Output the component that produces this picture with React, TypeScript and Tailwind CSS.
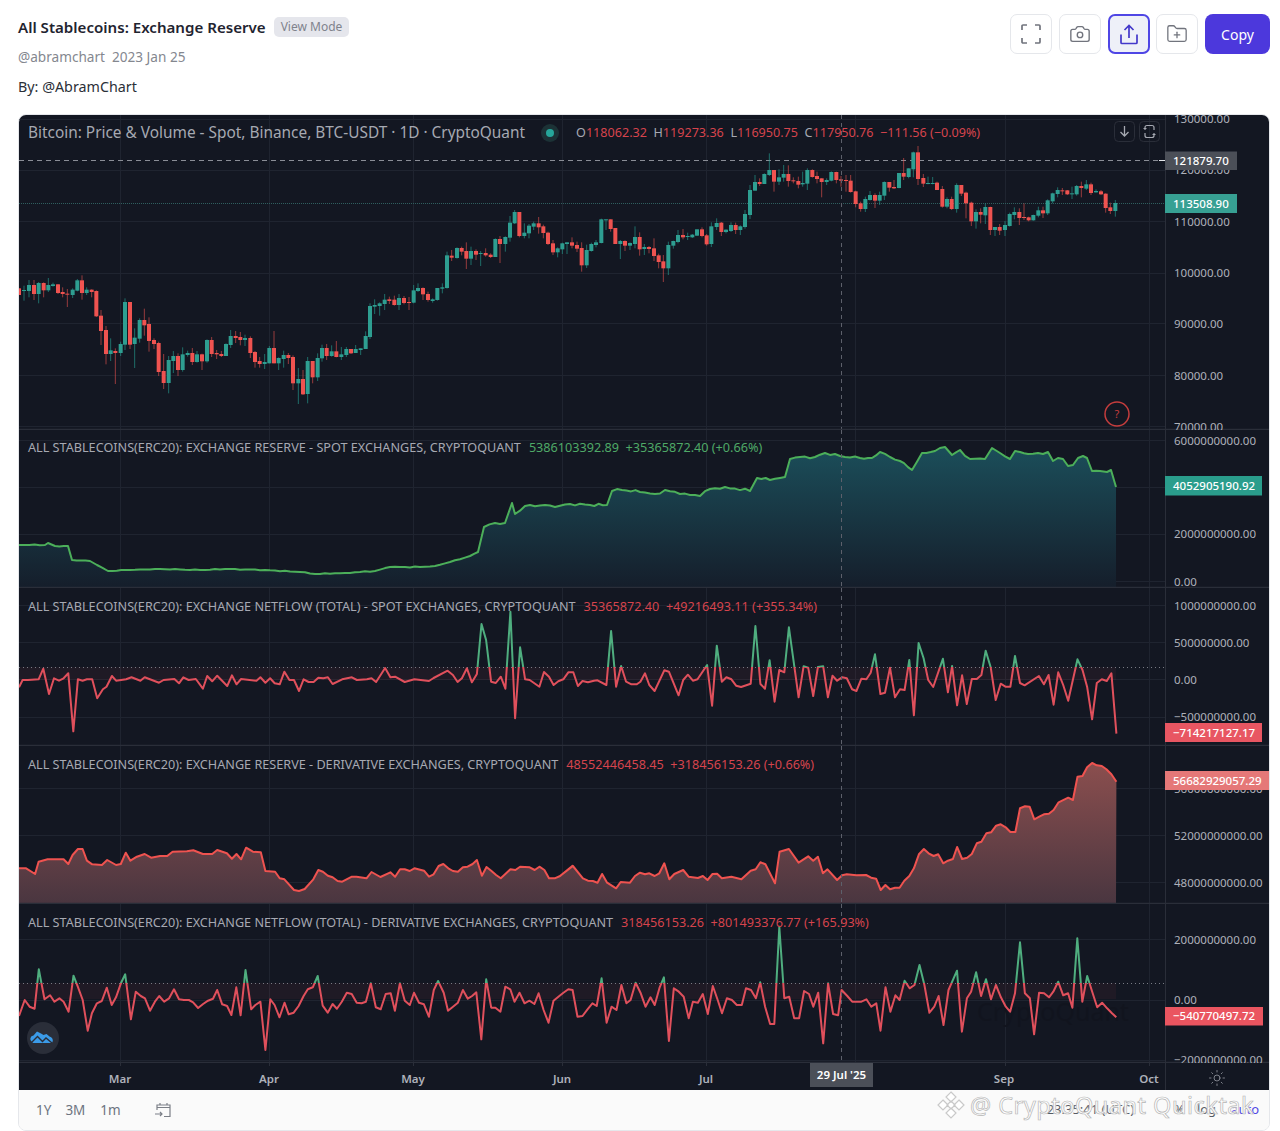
import React from "react";
import { Camera, FolderPlus, Sun } from "lucide-react";

type C = number[];
// candles: x, green?, bodyTop, bodyBottom, high, low (in sampled coordinates)
const seg1: C[] = [[0,0,415,435,415,435],[15,1,420,423,407,452],[30,1,405,423,390,442],[45,0,405,432,390,450],[59,1,399,432,396,460],[74,0,399,421,397,442],[88,1,405,421,384,426],[102,1,403,408,398,410],[117,0,403,429,402,432],[131,0,426,432,412,442],[145,0,431,434,417,471],[161,1,419,435,415,444],[175,1,391,422,387,424],[189,0,391,429,376,449],[203,1,419,429,412,435],[218,0,419,426,418,442],[232,0,423,499,421,501],[246,0,497,543,480,585],[261,0,540,612,528,643],[275,1,601,612,565,633],[289,0,603,609,595,702],[305,1,582,609,575,618],[318,1,456,584,445,600],[333,0,456,584,456,597],[347,1,563,582,535,654],[362,1,510,566,505,578],[376,0,510,526,476,557],[390,0,522,573,502,605],[405,0,570,582,565,597],[419,0,579,666,575,678],[434,0,663,699,612,717],[449,1,630,699,618,730],[463,1,618,633,603,669],[477,0,618,660,610,678],[491,1,613,660,592,665],[506,1,609,615,602,620],[520,0,609,636,594,645],[534,1,613,636,603,638],[549,0,613,634,611,660],[564,1,570,634,568,638],[578,0,570,612,561,621],[593,0,609,613,600,627],[607,0,612,618,603,621],[621,1,582,618,580,618],[635,1,558,585,540,594],[650,0,558,564,543,579],[664,0,561,570,546,586],[678,1,564,570,554,588],[694,0,564,609,559,624],[708,0,606,636,603,653],[722,0,633,642,621,653],[737,1,636,642,612,657],[751,1,594,640,588,640],[765,0,594,640,543,640],[779,1,624,640,622,660],[794,1,615,627,602,653],[808,0,615,624,609,642],[822,0,621,700,616,720],[838,1,687,700,654,762],[852,0,687,733,660,735],[866,1,633,732,621,760],[881,0,633,682,633,700],[896,1,624,682,610,693],[909,1,594,625,584,635],[923,0,594,618,582,630],[938,1,604,618,586,620],[952,0,604,621,573,622],[967,1,613,621,591,630],[982,1,597,615,591,621],[996,0,597,610,597,612],[1010,1,597,609,585,609],[1025,1,595,600,595,615],[1040,1,558,597,544,597],[1053,1,468,561,460,567],[1067,1,465,470,448,492],[1082,1,460,468,457,497],[1097,1,449,462,432,480],[1111,0,448,453,440,462],[1126,0,449,465,437,467],[1140,1,444,465,432,480],[1155,0,444,459,438,463],[1170,0,456,459,441,480],[1184,1,421,458,405,460],[1197,1,414,423,400,426]];
const seg2: C[] = [[69,0,414,433,412,450],[84,0,432,450,425,455],[98,1,448,453,445,458],[112,1,414,450,414,452],[127,1,412,416,400,430],[141,1,316,414,305,416],[155,0,317,323,300,333],[171,1,294,324,292,326],[185,0,294,305,290,316],[199,0,303,326,277,357],[213,1,303,326,290,345],[228,0,303,314,298,330],[242,1,309,312,303,348],[257,0,309,316,295,320],[272,0,314,321,310,324],[286,1,267,321,265,321],[300,0,267,282,258,339],[316,1,261,282,259,305],[330,1,218,263,198,275],[344,1,186,220,180,222],[358,0,186,258,186,262],[373,1,248,258,220,265],[387,1,227,250,222,265],[401,1,220,230,215,240],[416,0,220,232,201,251],[430,0,229,249,224,265],[444,0,248,282,245,285],[459,0,280,307,270,315],[473,1,295,307,292,322],[487,1,280,298,278,312],[501,1,277,282,277,312],[516,0,277,287,262,295],[531,0,285,296,275,306],[545,0,294,346,277,365],[560,1,300,346,284,354],[574,1,282,303,278,305],[588,1,277,285,270,292],[604,1,208,279,206,280],[618,1,208,210,208,240],[632,0,208,237,208,245],[646,0,234,282,234,282],[661,1,273,282,270,327],[675,0,273,287,271,303],[690,1,279,287,277,300],[705,1,261,282,229,295],[719,0,261,298,247,317],[733,1,291,297,282,315],[747,0,291,297,288,310],[762,0,295,318,265,333],[776,0,316,336,311,355],[790,0,334,355,315,396],[805,1,285,355,275,375],[820,1,273,287,272,296],[834,1,255,276,240,280],[849,0,255,262,237,268],[863,1,258,261,248,270],[877,1,254,262,252,264],[891,1,238,257,238,258],[906,0,238,258,232,262],[920,0,256,283,252,287],[934,1,229,282,217,291],[950,1,219,231,205,240],[964,0,218,246,216,258],[978,1,239,246,238,250],[993,1,225,243,217,246],[1007,0,225,240,218,252],[1021,1,229,240,226,255],[1035,1,192,231,180,236],[1050,1,120,195,105,207],[1065,1,96,122,75,122],[1079,0,96,102,85,108],[1093,1,72,102,70,102],[1108,1,60,75,10,78],[1122,0,60,95,60,125],[1137,1,82,95,58,105],[1151,1,72,83,45,95],[1165,0,72,93,46,110],[1180,0,91,94,82,100],[1195,0,93,104,80,115]];
const seg3: C[] = [[128,1,129,133,95,140],[142,1,90,131,85,150],[157,0,90,111,88,113],[171,0,108,117,95,130],[185,0,115,126,115,172],[200,1,120,126,115,135],[214,1,96,122,94,124],[229,0,96,120,95,130],[243,0,118,122,108,140],[258,0,120,123,105,155],[272,0,122,156,105,158],[287,0,154,192,152,202],[302,0,190,207,185,215],[316,1,177,207,170,216],[330,1,165,180,153,182],[345,0,165,182,160,204],[359,1,165,182,155,195],[373,1,126,167,124,180],[388,0,126,143,126,155],[402,0,141,145,120,147],[417,1,99,144,99,145],[431,0,99,110,54,120],[446,1,85,111,85,115],[460,1,37,88,35,112],[474,0,37,117,18,135],[490,0,114,131,102,141],[504,1,129,132,110,133],[518,1,129,132,111,133],[531,0,128,150,125,150],[547,0,147,200,138,203],[561,1,177,200,172,205],[575,0,177,207,170,210],[590,1,135,207,130,218],[604,0,135,161,135,168],[618,0,158,190,155,235],[634,0,188,244,185,258],[648,1,216,244,208,266],[662,0,216,224,205,250],[676,1,201,226,190,252],[691,0,201,270,200,285],[705,1,261,270,261,288],[719,0,261,272,252,285],[735,1,255,270,243,288],[749,1,222,258,218,260],[763,1,216,225,202,238],[778,0,216,234,205,255],[792,0,231,234,190,240],[806,0,232,241,230,244],[820,1,225,241,224,242],[835,1,211,227,200,232],[849,0,211,220,200,234],[863,1,181,220,178,225],[878,1,160,184,158,190],[893,1,150,162,142,172],[907,0,151,154,144,165],[922,0,151,163,150,165],[936,1,160,163,140,177],[950,1,138,163,135,167],[964,0,138,144,125,172],[979,1,133,146,120,150],[993,0,133,159,128,165],[1008,1,153,157,148,158],[1023,0,154,163,150,165],[1037,0,161,204,160,218],[1051,0,202,213,188,222],[1066,1,189,213,180,230]];

const candles = [
  ...seg1.map((c) => ({ x: 19 + c[0] / 3, g: c[1], t: 150 + c[2] / 3, b: 150 + c[3] / 3, h: 150 + c[4] / 3, l: 150 + c[5] / 3 })),
  ...seg2.map((c) => ({ x: 400 + c[0] / 3, g: c[1], t: 150 + c[2] / 3, b: 150 + c[3] / 3, h: 150 + c[4] / 3, l: 150 + c[5] / 3 })),
  ...seg3.map((c) => ({ x: 760 + c[0] / 3, g: c[1], t: 140 + c[2] / 3, b: 140 + c[3] / 3, h: 140 + c[4] / 3, l: 140 + c[5] / 3 })),
];

const pts = (s: number[], ox: number, sx: number, oy: number, sy: number) => {
  const out: [number, number][] = [];
  for (let i = 0; i < s.length; i += 2) out.push([ox + s[i] / sx, oy + s[i + 1] / sy]);
  return out;
};
const toD = (p: [number, number][]) => p.map((q, i) => `${i ? "L" : "M"}${q[0].toFixed(1)} ${q[1].toFixed(1)}`).join("");

const reserveSpotRaw: [number, number][] = [[19,545],[45,545],[48,543],[55,546],[68,546],[72,560],[90,561],[97,565],[108,571],[130,570],[160,569],[200,570],[225,569],[265,570],[300,572],[315,574],[345,573],[375,571],[390,567],[420,567],[435,566],[450,562],[470,556],[478,552],[484,527],[495,523],[505,523],[512,503],[515,514],[525,506],[545,505],[555,507],[570,504],[590,505],[607,505],[612,491],[622,490],[640,492],[655,494],[665,490],[680,494],[700,496],[710,489],[725,487],[750,491],[757,478],[770,480],[785,477],[790,459],[800,457],[815,457],[825,453],[840,456],[860,458],[872,458],[880,452],[890,457],[900,461],[912,470],[922,453],[935,451],[945,447],[952,455],[960,450],[970,459],[985,459],[992,448],[1000,453],[1010,459],[1015,451],[1020,452],[1028,454],[1038,453],[1043,454],[1048,452],[1053,461],[1058,458],[1063,459],[1068,466],[1073,465],[1078,458],[1083,456],[1087,458],[1092,471],[1100,471],[1107,472],[1111,470],[1116,487]];

const reserveSpot: [number, number][] = (() => {
  const out: [number, number][] = [];
  let k = 0;
  for (let j = 0; j < reserveSpotRaw.length - 1; j++) {
    const [x0, y0] = reserveSpotRaw[j];
    const [x1, y1] = reserveSpotRaw[j + 1];
    const n = Math.max(1, Math.round((x1 - x0) / 4.8));
    for (let i = 0; i < n; i++) {
      const f = i / n;
      const amp = x0 < 480 ? 0.25 : x0 < 1000 ? 0.8 : 0.2;
      const noise = i === 0 ? 0 : (Math.sin(k * 1.7) + Math.sin(k * 3.1 + 1)) * amp;
      out.push([x0 + (x1 - x0) * f, y0 + (y1 - y0) * f + noise]);
      k++;
    }
  }
  out.push(reserveSpotRaw[reserveSpotRaw.length - 1]);
  return out;
})();

const netSpot = [
  ...pts([0,292,10,270,25,270,55,268,68,236,84,312,98,265,112,272,125,265,138,250,152,424,165,268,178,272,190,268,205,268,219,325,235,298,245,290,260,258,272,272,300,268,315,262,340,272,352,262,392,278,405,270,435,267,448,280,460,262,475,270,495,267,515,296,527,258,541,274,555,257,583,288,596,256,609,283,622,267,665,272,676,262,690,278,703,265,716,280,730,283,743,245,757,270,770,270,784,303,797,268,811,276,825,276,838,263,852,265,865,262,878,282,905,268,932,262,946,270,974,268,987,265,1000,276,1025,234,1040,262,1053,260,1080,276,1107,268,1148,273,1161,264,1200,242,1215,255,1228,276,1240,265,1254,235,1268,277,1282,252,1295,102,1308,150,1322,275,1335,279,1349,260,1362,296,1376,65,1389,385,1403,172,1417,268,1430,270,1457,290,1470,246,1484,260,1497,285,1510,274,1524,268,1538,247,1552,247], 19, 2.8, 590, 3),
  ...pts([50,288,63,273,78,277,95,272,105,271,130,285,143,123,157,290,171,228,185,275,200,283,215,283,225,275,238,250,250,285,265,303,292,241,305,245,332,316,345,270,358,254,372,272,385,268,412,225,426,347,439,167,453,275,466,262,480,268,493,287,507,291,534,281,547,108,561,282,574,296,587,211,601,335,614,240,628,247,641,112,668,322,682,229,695,233,709,318,722,231,737,229,750,322,763,257,776,272,790,262,803,265,818,298,830,303,844,266,858,268,870,248,882,193,897,312,910,308,924,233,938,322,952,298,965,300,978,210,991,376,1004,159,1018,205,1031,270,1045,291,1072,206,1086,307,1098,228,1112,346,1126,256,1139,342,1153,267,1167,267,1180,255,1192,182,1206,232,1220,330,1234,281,1247,290,1261,290,1274,198,1288,279,1301,286,1341,258,1355,283,1368,255,1382,344,1395,247,1409,285,1423,332,1449,208,1463,240,1476,290,1490,388,1503,279,1517,268,1531,273,1544,250,1558,431], 560, 2.8, 590, 3),
];

const reserveDeriv = [
  ...pts([0,835,20,835,45,852,55,815,80,808,105,808,125,808,138,822,150,795,165,777,178,777,190,812,205,823,232,825,247,810,272,825,285,822,299,788,312,812,330,800,352,792,370,803,395,798,415,798,430,785,470,784,488,781,515,792,541,792,555,780,582,790,596,806,609,792,622,808,636,773,655,785,677,787,690,843,717,845,730,865,743,868,770,900,784,903,800,897,824,868,838,840,851,845,865,857,878,862,892,873,905,875,932,860,945,860,973,865,987,846,1012,861,1040,847,1053,860,1067,838,1080,838,1094,843,1107,835,1134,842,1148,860,1161,853,1175,828,1188,822,1202,835,1215,843,1229,845,1243,832,1256,830,1270,822,1282,810,1296,857,1309,831,1323,843,1336,855,1349,865,1376,838,1390,840,1403,830,1430,832,1444,840,1457,830,1471,840,1484,865,1500,865,1515,858,1550,827], 19, 2.8, 590, 3),
  ...pts([0,858,36,828,64,865,78,872,92,873,105,878,118,852,132,878,157,895,170,876,196,878,210,858,224,848,238,853,250,850,265,858,278,850,292,820,306,868,320,852,345,840,360,860,386,864,400,858,413,870,427,852,440,851,453,865,480,860,508,868,534,842,548,838,561,817,575,823,602,880,615,785,641,777,668,818,695,799,709,812,722,800,736,850,749,838,776,870,790,856,803,853,830,856,857,855,871,863,885,866,898,900,911,885,924,898,938,893,951,893,964,872,978,858,991,835,1005,793,1019,777,1032,790,1046,798,1059,793,1073,820,1086,812,1100,807,1112,771,1126,807,1140,803,1153,792,1167,760,1180,755,1194,730,1207,727,1221,707,1234,703,1248,712,1261,726,1275,726,1288,655,1302,649,1315,650,1328,688,1342,680,1355,673,1369,671,1382,660,1396,637,1423,623,1436,630,1449,560,1463,558,1476,532,1490,519,1503,526,1517,528,1530,538,1544,553,1558,575], 560, 2.8, 590, 3),
];

const netDeriv = pts([0,318,8,270,15,290,22,296,28,178,36,268,44,256,50,275,57,265,63,275,70,305,77,197,83,230,90,270,97,362,103,310,110,280,117,273,124,233,131,285,137,262,144,220,150,193,158,328,165,245,172,258,178,265,185,302,192,275,198,258,205,275,212,265,219,238,226,268,233,270,240,270,246,277,253,294,260,282,267,272,274,266,280,240,287,283,294,288,300,315,307,232,313,316,320,180,328,298,334,285,341,275,348,420,355,268,361,285,368,322,375,278,381,313,388,308,395,288,402,258,408,238,415,232,422,198,429,287,436,308,443,282,449,296,456,275,463,248,470,252,477,278,484,280,490,275,497,220,504,292,511,298,518,252,525,250,531,302,538,220,545,272,552,285,558,248,565,278,572,283,579,320,586,240,592,213,600,248,606,302,613,290,620,278,627,240,634,266,640,258,646,247,653,388,660,208,667,293,673,293,680,305,687,230,694,238,700,275,707,248,714,280,721,272,728,282,734,250,741,300,748,338,755,272,762,260,769,248,776,238,782,240,789,320,796,318,803,298,810,280,816,288,823,205,830,338,837,290,844,300,851,225,858,280,864,270,871,218,878,248,885,290,892,262,898,285,905,232,911,202,918,393,925,235,932,245,939,260,946,325,952,275,959,278,966,252,973,312,980,228,987,270,993,310,1000,265,1007,270,1014,285,1021,285,1027,235,1034,240,1041,265,1047,217,1054,290,1061,342,1067,342,1074,50,1081,265,1088,260,1095,325,1102,325,1109,243,1116,252,1122,290,1129,248,1136,400,1143,220,1150,312,1157,316,1162,240,1170,258,1177,275,1184,275,1190,275,1197,268,1204,290,1211,280,1217,362,1224,232,1231,305,1238,256,1244,270,1251,212,1258,235,1265,225,1272,165,1279,225,1286,308,1293,290,1299,258,1306,345,1313,240,1325,182,1332,365,1339,265,1345,245,1352,187,1359,258,1366,208,1373,268,1380,225,1387,262,1394,290,1400,305,1407,250,1414,97,1421,250,1428,265,1434,373,1441,248,1448,250,1455,262,1461,245,1468,215,1475,256,1482,250,1488,293,1495,85,1502,275,1509,198,1516,245,1523,292,1530,278,1537,295,1544,310,1550,322], 19, 1.4126, 910, 3);

const VGRID = [120, 269, 413, 562, 706, 855, 1005, 1149];
const GRID = "#1f2430";
const SEP = "#2a2e39";

type Tick = { y: number; label: string };
type Tag = { t: number; b: number; r: number; fill: string; label: string };

function Pane({ top, height, grid, ticks, tags, legend, children }: {
  top: number; height: number; grid: number[]; ticks: Tick[]; tags: Tag[]; legend: React.ReactNode; children: React.ReactNode;
}) {
  const bottom = top + height;
  return (
    <div className="relative w-full shrink-0 overflow-hidden" style={{ height }}>
      <svg width={1250} height={height} viewBox={`19 ${top} 1250 ${height}`} className="block">
        {VGRID.map((x) => <line key={x} x1={x + 0.5} x2={x + 0.5} y1={top} y2={bottom} stroke={GRID} />)}
        {grid.map((y) => <line key={y} x1={19} x2={1165} y1={y + 0.5} y2={y + 0.5} stroke={GRID} />)}
        {children}
        <line x1={841.5} x2={841.5} y1={top} y2={bottom} stroke="#5d606b" strokeDasharray="4 4" />
        <line x1={1165.5} x2={1165.5} y1={top} y2={bottom} stroke={SEP} />
        <line x1={19} x2={1269} y1={bottom - 0.5} y2={bottom - 0.5} stroke={SEP} strokeWidth={1.5} />
        {ticks.map((t) => (
          <text key={t.label} x={1174} y={t.y + 4} className="fill-[#aeb1ba] text-[11.5px]">{t.label}</text>
        ))}
        {tags.map((t) => (
          <g key={t.label}>
            <rect x={1165} y={t.t} width={t.r - 1165} height={t.b - t.t} fill={t.fill} />
            <text x={1173} y={(t.t + t.b) / 2 + 4} className="fill-white text-[11.5px] font-medium">{t.label}</text>
          </g>
        ))}
      </svg>
      <div className="absolute left-[9px] top-0 flex items-center whitespace-nowrap">{legend}</div>
    </div>
  );
}

function Legend({ top, title, values, color }: { top: number; title: string; values: string; color: string }) {
  return (
    <div className="flex gap-[8px] text-[12.65px] leading-[18px] whitespace-pre" style={{ marginTop: top }}>
      <span className="text-[#a6a9b2]">{title}</span>
      <span style={{ color }}>{values}</span>
    </div>
  );
}

function IconButton({ children, active }: { children: React.ReactNode; active?: boolean }) {
  return (
    <div className={active
      ? "flex h-[40px] w-[42px] items-center justify-center rounded-[7px] border-2 border-[#4f46e5] bg-[#eef0f8] text-[#4338ca]"
      : "flex h-[40px] w-[42px] items-center justify-center rounded-[7px] border border-[#e5e7eb] bg-white text-[#71747d]"}>
      {children}
    </div>
  );
}

export default function App() {
  const lastX = 1116;
  const areaSpot = `${toD(reserveSpot)}L${lastX} 587L19 587Z`;
  const areaDeriv = `${toD(reserveDeriv)}L${lastX} 903L19 903Z`;
  return (
    <div className="h-[1131px] w-[1280px] overflow-hidden bg-white pl-[18px] pr-[10px] font-['Noto_Sans',sans-serif]">
      <header className="flex h-[114px] items-start justify-between">
        <div className="flex flex-col pt-[15px]">
          <div className="flex h-[24px] items-center gap-[8px]">
            <h1 className="text-[15.1px] font-semibold text-[#1f2430]">All Stablecoins: Exchange Reserve</h1>
            <span className="flex h-[20px] items-center rounded-[5px] bg-[#e5e6ec] px-[7px] text-[12px] text-[#80838c]">View Mode</span>
          </div>
          <div className="mt-[8px] flex h-[20px] items-center gap-[7px] text-[13.6px] text-[#84878f]">
            <span>@abramchart</span><span>2023 Jan 25</span>
          </div>
          <div className="mt-[10px] flex h-[20px] items-center text-[14.3px] text-[#2b2f38]">By: @AbramChart</div>
        </div>
        <div className="mt-[14px] flex items-center gap-[6.67px]">
          <IconButton>
            <svg width="20" height="20" viewBox="0 0 20 20" fill="none" stroke="currentColor" strokeWidth="1.7"><path d="M1 6V2a1 1 0 0 1 1-1h4M14 1h4a1 1 0 0 1 1 1v4M19 14v4a1 1 0 0 1-1 1h-4M6 19H2a1 1 0 0 1-1-1v-4" /></svg>
          </IconButton>
          <IconButton><Camera size={22} strokeWidth={1.5} /></IconButton>
          <IconButton active>
            <svg width="20" height="21" viewBox="0 0 20 21" fill="none" stroke="currentColor" strokeWidth="1.7"><path d="M2 10.5v8a1 1 0 0 0 1 1h14a1 1 0 0 0 1-1v-8M10 14V1.5M5.5 6 10 1.5 14.5 6" /></svg>
          </IconButton>
          <IconButton><FolderPlus size={22} strokeWidth={1.4} /></IconButton>
          <div className="flex h-[40px] w-[65px] items-center justify-center rounded-[8px] bg-[#4c38dc] text-[14px] text-white">Copy</div>
        </div>
      </header>

      <section className="flex h-[1017px] flex-col overflow-hidden rounded-[8px] border border-[#e5e7eb]">
        <div className="flex flex-col bg-[#131722]">
          <Pane
            top={115}
            height={315}
            grid={[119, 170, 221, 273, 323, 375, 426]}
            ticks={[
              { y: 119, label: "130000.00" }, { y: 170, label: "120000.00" }, { y: 222, label: "110000.00" },
              { y: 273, label: "100000.00" }, { y: 324, label: "90000.00" }, { y: 376, label: "80000.00" }, { y: 427, label: "70000.00" },
            ]}
            tags={[
              { t: 151.5, b: 170, r: 1237, fill: "#4b4f58", label: "121879.70" },
              { t: 194, b: 213, r: 1237, fill: "#37a093", label: "113508.90" },
            ]}
            legend={
              <div className="mt-[8px] flex h-[20px] items-center">
                <span className="text-[15.4px] text-[#a6a9b2]">Bitcoin: Price &amp; Volume - Spot, Binance, BTC-USDT · 1D · CryptoQuant</span>
                <span className="ml-[16px] flex h-[18px] w-[18px] items-center justify-center rounded-full bg-[#1c3236]">
                  <span className="h-[8px] w-[8px] rounded-full bg-[#26a69a]" />
                </span>
                <span className="ml-[17px] text-[12.6px] text-[#d6444d] whitespace-pre">
                  <span className="text-[#a6a9b2]">O</span>118062.32  <span className="text-[#a6a9b2]">H</span>119273.36  <span className="text-[#a6a9b2]">L</span>116950.75  <span className="text-[#a6a9b2]">C</span>117950.76  −111.56 (−0.09%)
                </span>
              </div>
            }
          >
            <line x1={19} x2={1165} y1={160.5} y2={160.5} stroke="#8a8d96" strokeDasharray="5 4" />
            <line x1={1159} x2={1165} y1={160.5} y2={160.5} stroke="#e5e7eb" />
            <line x1={19} x2={1165} y1={203.5} y2={203.5} stroke="#2f5f5f" strokeDasharray="1 1" />
            {candles.map((c, i) => (
              <g key={i}>
                <line x1={c.x} x2={c.x} y1={c.h} y2={c.l} stroke={c.g ? "#26a69a" : "#ef5350"} strokeOpacity={0.6} />
                <rect x={c.x - 2} y={c.t} width={4} height={Math.max(c.b - c.t, 1)} fill={c.g ? "#2e9e91" : "#ef5350"} />
              </g>
            ))}
            <g fill="none" stroke="#2a2e39">
              <rect x={1114.5} y={121.5} width={20} height={20} rx={4} />
              <rect x={1139.5} y={121.5} width={20} height={20} rx={4} />
            </g>
            <path d="M1124.5 126v10M1120.5 132l4 4 4-4" fill="none" stroke="#a6a9b2" strokeWidth={1.3} />
            <path d="M1145 130v-2.5a2 2 0 0 1 2-2h5a2 2 0 0 1 2 2v2.5M1145 133v2.500a2 2 0 0 0 2 2h5a2 2 0 0 0 2-2V133M1143.500 128.500h3M1152.500 134.500h3" fill="none" stroke="#a6a9b2" strokeWidth={1.2} />
            <circle cx={1117} cy={414} r={12} fill="none" stroke="#c53d3d" strokeWidth={1.5} />
            <text x={1117} y={418} textAnchor="middle" className="fill-[#c53d3d] text-[11px]">?</text>
          </Pane>

          <Pane
            top={430}
            height={158}
            grid={[440, 487, 534, 581]}
            ticks={[
              { y: 441, label: "6000000000.00" }, { y: 534, label: "2000000000.00" }, { y: 582, label: "0.00" },
            ]}
            tags={[{ t: 476, b: 495.500, r: 1262, fill: "#2a9d8c", label: "4052905190.92" }]}
            legend={<Legend top={8} title="ALL STABLECOINS(ERC20): EXCHANGE RESERVE - SPOT EXCHANGES, CRYPTOQUANT" values="5386103392.89  +35365872.40 (+0.66%)" color="#4fa967" />}
          >
            <defs>
              <linearGradient id="gs" gradientUnits="userSpaceOnUse" x1="0" x2="0" y1="450" y2="587">
                <stop offset="0" stopColor="#1b4d59" />
                <stop offset="1" stopColor="#151e2b" />
              </linearGradient>
            </defs>
            <path d={areaSpot} fill="url(#gs)" />
            <path d={toD(reserveSpot)} fill="none" stroke="#4caf5a" strokeWidth={2} strokeLinejoin="round" />
          </Pane>

          <Pane
            top={588}
            height={158}
            grid={[605, 642, 679, 717]}
            ticks={[
              { y: 606, label: "1000000000.00" }, { y: 643, label: "500000000.00" }, { y: 680, label: "0.00" }, { y: 717, label: "−500000000.00" },
            ]}
            tags={[{ t: 723, b: 742, r: 1262, fill: "#e85662", label: "−714217127.17" }]}
            legend={<Legend top={9} title="ALL STABLECOINS(ERC20): EXCHANGE NETFLOW (TOTAL) - SPOT EXCHANGES, CRYPTOQUANT" values="35365872.40  +49216493.11 (+355.34%)" color="#d6444d" />}
          >
            <defs>
              <clipPath id="upA"><rect x="19" y="588" width="1146" height="79" /></clipPath>
              <clipPath id="dnA"><rect x="19" y="667" width="1146" height="79" /></clipPath>
            </defs>
            <rect x={19} y={667} width={1097} height={13} fill="#ef5350" fillOpacity={0.06} />
            <line x1={19} x2={1165} y1={667.5} y2={667.5} stroke="#787b84" strokeDasharray="1 3" />
            <path d={toD(netSpot)} clipPath="url(#upA)" fill="none" stroke="#4fae7f" strokeWidth={2} strokeLinejoin="round" />
            <path d={toD(netSpot)} clipPath="url(#dnA)" fill="none" stroke="#e0505c" strokeWidth={2} strokeLinejoin="round" />
          </Pane>

          <Pane
            top={746}
            height={158}
            grid={[788, 835, 882]}
            ticks={[
              { y: 789, label: "56000000000.00" }, { y: 836, label: "52000000000.00" }, { y: 883, label: "48000000000.00" },
            ]}
            tags={[{ t: 771, b: 790, r: 1270, fill: "#e57878", label: "56682929057.29" }]}
            legend={<Legend top={9} title="ALL STABLECOINS(ERC20): EXCHANGE RESERVE - DERIVATIVE EXCHANGES, CRYPTOQUANT" values="48552446458.45  +318456153.26 (+0.66%)" color="#d6444d" />}
          >
            <defs>
              <linearGradient id="gd" gradientUnits="userSpaceOnUse" x1="0" x2="0" y1="765" y2="903">
                <stop offset="0" stopColor="#8a4e4e" />
                <stop offset="1" stopColor="#4a3640" />
              </linearGradient>
            </defs>
            <path d={areaDeriv} fill="url(#gd)" />
            <path d={toD(reserveDeriv)} fill="none" stroke="#ef5350" strokeWidth={2} strokeLinejoin="round" />
          </Pane>

          <Pane
            top={904}
            height={159}
            grid={[939, 1000, 1060]}
            ticks={[
              { y: 940, label: "2000000000.00" }, { y: 1000, label: "0.00" }, { y: 1060, label: "−2000000000.00" },
            ]}
            tags={[{ t: 1007, b: 1025.500, r: 1263, fill: "#ea5560", label: "−540770497.72" }]}
            legend={<Legend top={9} title="ALL STABLECOINS(ERC20): EXCHANGE NETFLOW (TOTAL) - DERIVATIVE EXCHANGES, CRYPTOQUANT" values="318456153.26  +801493376.77 (+165.93%)" color="#d6444d" />}
          >
            <defs>
              <clipPath id="upB"><rect x="19" y="904" width="1146" height="79" /></clipPath>
              <clipPath id="dnB"><rect x="19" y="983" width="1146" height="79" /></clipPath>
            </defs>
            <rect x={19} y={983} width={1097} height={16} fill="#ef5350" fillOpacity={0.06} />
            <line x1={19} x2={1165} y1={983.5} y2={983.5} stroke="#787b84" strokeDasharray="1 3" />
            <text x={977} y={1021} className="fill-[#11141e] text-[25px]">CryptoQuant</text>
            <path d={toD(netDeriv)} clipPath="url(#upB)" fill="none" stroke="#4fae7f" strokeWidth={2} strokeLinejoin="round" />
            <path d={toD(netDeriv)} clipPath="url(#dnB)" fill="none" stroke="#e0505c" strokeWidth={2} strokeLinejoin="round" />
            <circle cx={43} cy={1038} r={16} fill="#2a2e39" />
            <path d="M32 1042a3.500 3.500 0 0 1 1.500-6.500l3.500-4 4 2 2.500 1.500 3-1 3 2.500a4 4 0 0 1 3 5.500 2 2 0 0 1-1.500 1H33.500a2 2 0 0 1-1.500-1z" fill="#3b9be8" />
            <path d="M31.500 1042.500l6-6 5 5 3.500-3.500 6 5" fill="none" stroke="#2a2e39" strokeWidth={1.4} />
          </Pane>

          <div className="relative h-[27px] w-full shrink-0 overflow-hidden">
            <svg width={1250} height={27} viewBox="19 1063 1250 27" className="block">
              {VGRID.map((x) => x !== 855 && <line key={x} x1={x + 0.5} x2={x + 0.5} y1={1063} y2={1066} stroke={SEP} />)}
              <line x1={1165.5} x2={1165.5} y1={1063} y2={1090} stroke={SEP} />
              {[["Mar", 120], ["Apr", 269], ["May", 413], ["Jun", 562], ["Jul", 706], ["Sep", 1004], ["Oct", 1149]].map(([l, x]) => (
                <text key={l as string} x={x as number} y={1083} textAnchor="middle" className="fill-[#aeb1ba] text-[11.5px] font-semibold">{l}</text>
              ))}
              <rect x={810} y={1063} width={63} height={24} fill="#4b4f58" />
              <text x={841.5} y={1079} textAnchor="middle" className="fill-white text-[11.5px] font-semibold">29 Jul '25</text>
            </svg>
            <Sun size={18} strokeWidth={1.2} className="absolute left-[1189px] top-[6px] text-[#8a8d96]" />
          </div>
        </div>

        <div className="relative flex h-[40px] items-center bg-[#fafafa] text-[13.5px] text-[#6d7480]">
          <span className="ml-[17px]">1Y</span>
          <span className="ml-[14px]">3M</span>
          <span className="ml-[15px]">1m</span>
          <svg className="ml-[33px]" width="18" height="16" viewBox="0 0 18 16" fill="none" stroke="#7b7f87" strokeWidth="1.2">
            <path d="M3 8V3h13v11.500H10M3 5.500h13M6 1v2M13 1v2M1 12h7M6 10l2 2-2 2" />
          </svg>
          <span className="ml-auto mr-[10px] flex items-center text-[13px] text-[#555a63]">
            <span className="mr-[40px]">23:35:41 (UTC)</span>
            <span className="mr-[12px]">%</span>
            <span className="mr-[15px]">log</span>
            <span className="text-[#4f46e5]">auto</span>
          </span>
          <div className="absolute left-[917px] top-[-1px] flex items-center gap-[4px]">
            <svg width="30" height="30" viewBox="0 0 30 30" fill="#fff" stroke="#c9c9c9" strokeWidth="1.2">
              <path d="M15 2l5 5-5 5-5-5zM7 10l5 5-5 5-5-5zM23 10l5 5-5 5-5-5zM15 18l5 5-5 5-5-5zM15 11l4 4-4 4-4-4z" />
            </svg>
            <span className="text-[23.500px] leading-[32px] tracking-[0.5px] text-white [-webkit-text-stroke:0.7px_#b5b5b5] [text-shadow:0_0_2px_white] whitespace-nowrap">@ CryptoQuant Quicktak</span>
          </div>
        </div>
      </section>
    </div>
  );
}
